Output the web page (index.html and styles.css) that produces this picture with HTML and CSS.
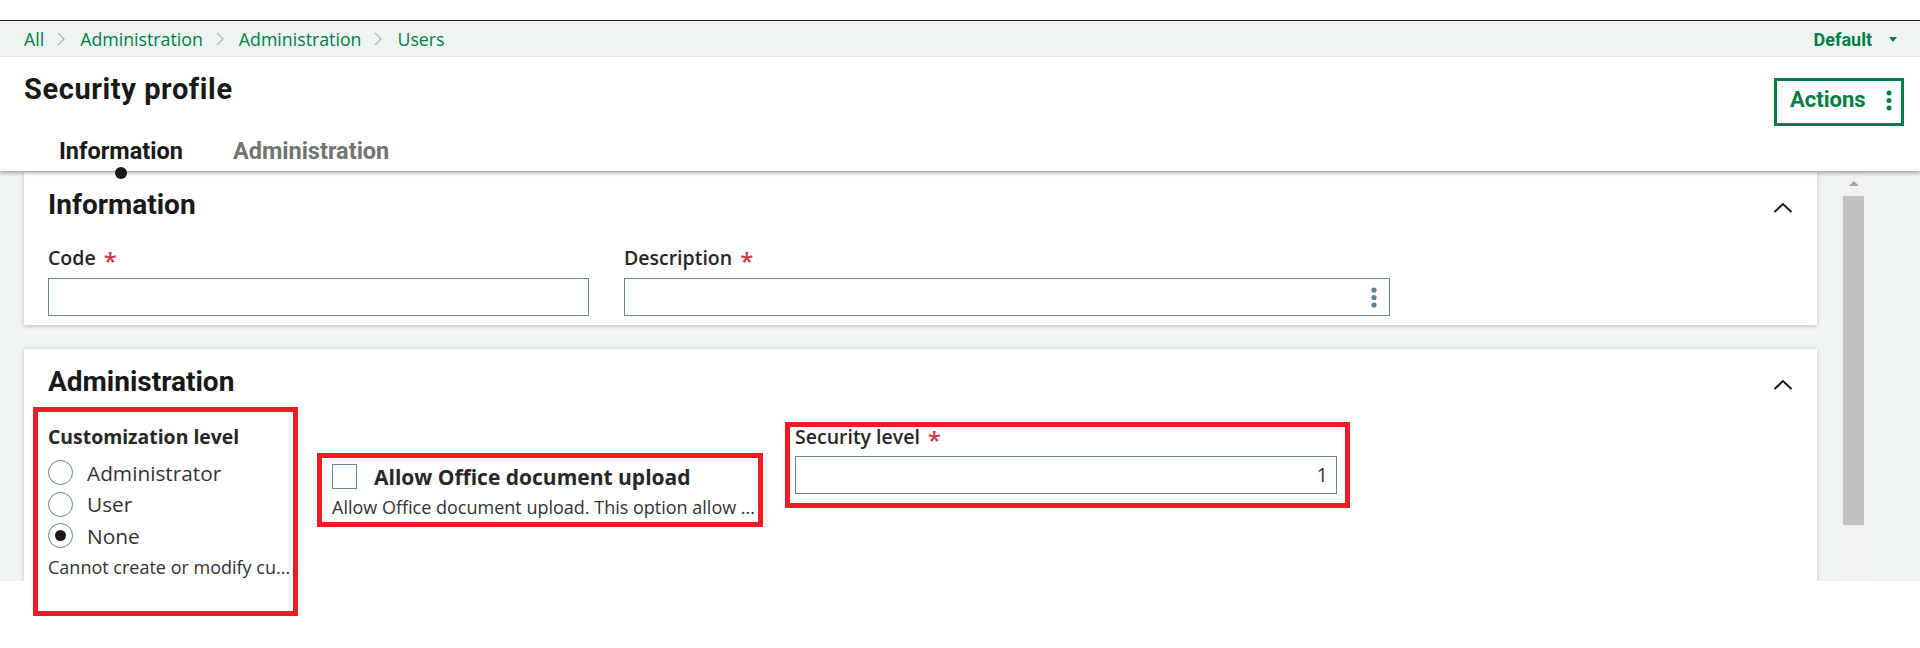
FILE: index.html
```html
<!DOCTYPE html>
<html lang="en">
<head>
<meta charset="utf-8">
<title>Security profile</title>
<link rel="stylesheet" href="styles.css">
</head>
<body>
<div class="topgap"></div>
<div class="app">
  <nav class="crumbs">
    <div class="crumb-list">
      <a class="crumb">All</a>
      <svg class="sep" viewBox="0 0 8 14"><polyline points="1,1 7,7 1,13"/></svg>
      <a class="crumb">Administration</a>
      <svg class="sep" viewBox="0 0 8 14"><polyline points="1,1 7,7 1,13"/></svg>
      <a class="crumb">Administration</a>
      <svg class="sep" viewBox="0 0 8 14"><polyline points="1,1 7,7 1,13"/></svg>
      <a class="crumb">Users</a>
    </div>
    <div class="view-select">Default<svg class="caret" viewBox="0 0 8 5"><polygon points="0,0 8,0 4,5"/></svg></div>
  </nav>
  <header class="page-header">
    <div class="head-left">
      <h1 class="page-title">Security profile</h1>
      <div class="tabs">
        <div class="tab active">Information<span class="tab-dot"></span></div>
        <div class="tab">Administration</div>
      </div>
    </div>
    <button class="actions">Actions<svg class="kebab" viewBox="0 0 6 21"><circle cx="3" cy="3" r="2.5"/><circle cx="3" cy="10.5" r="2.5"/><circle cx="3" cy="18" r="2.5"/></svg></button>
  </header>
  <div class="main">
    <div class="cards">
      <section class="card">
        <div class="card-head">
          <h2 class="card-title">Information</h2>
          <svg class="chev" viewBox="0 0 20 11"><polyline points="1.5,10 10,2 18.5,10"/></svg>
        </div>
        <div class="field-row">
          <div class="field f-code">
            <label class="flabel">Code<span class="req">*</span></label>
            <div class="input"></div>
          </div>
          <div class="field f-desc">
            <label class="flabel">Description<span class="req">*</span></label>
            <div class="input with-menu"><svg class="dots" viewBox="0 0 6 21"><circle cx="3" cy="3" r="2.6"/><circle cx="3" cy="10.5" r="2.6"/><circle cx="3" cy="18" r="2.6"/></svg></div>
          </div>
        </div>
      </section>
      <section class="card">
        <div class="card-head">
          <h2 class="card-title">Administration</h2>
          <svg class="chev" viewBox="0 0 20 11"><polyline points="1.5,10 10,2 18.5,10"/></svg>
        </div>
        <div class="field-row admin-row">
          <div class="field f-level">
            <label class="flabel legend">Customization level</label>
            <div class="radios">
              <div class="radio-row"><span class="radio"></span><span class="rlabel">Administrator</span></div>
              <div class="radio-row"><span class="radio"></span><span class="rlabel">User</span></div>
              <div class="radio-row"><span class="radio checked"></span><span class="rlabel">None</span></div>
            </div>
            <div class="help help-level">Cannot create or modify cu...</div>
          </div>
          <div class="field f-office">
            <div class="check-row"><span class="checkbox"></span><span class="clabel">Allow Office document upload</span></div>
            <div class="help help-office">Allow Office document upload. This option allow ...</div>
          </div>
          <div class="field f-sec">
            <label class="flabel">Security level<span class="req">*</span></label>
            <div class="input num">1</div>
          </div>
        </div>
      </section>
    </div>
    <div class="scrollbar">
      <div class="sb-arrow"><span class="sb-tri"></span></div>
      <div class="sb-thumb"></div>
    </div>
  </div>
</div>
<div class="mark m1"></div>
<div class="mark m2"></div>
<div class="mark m3"></div>
</body>
</html>
```
FILE: styles.css
```css
* { box-sizing: border-box; }
html { background: #fff; }
body {
  margin: 0;
  min-height: 648px;
  background: #fff;
  font-family: "Open Sans", sans-serif;
  color: #191919;
  position: relative;
}
.topgap { height: 20px; }
.app {
  border-top: 1px solid #1e1e1e;
  height: 561px;
  display: flex;
  flex-direction: column;
}
.crumbs {
  flex: none;
  height: 36px;
  background: #eff3f4;
  display: flex;
  align-items: center;
  justify-content: space-between;
  padding: 0 23px 0 24px;
}
.crumb-list {
  display: flex;
  align-items: center;
  font-size: 17.75px;
  color: #007e45;
}
.crumb { color: #007e45; text-decoration: none; }
.sep {
  width: 8px;
  height: 14px;
  margin: 0 15px 0 13px;
  fill: none;
  stroke: #b4b4b4;
  stroke-width: 1.3;
}
.view-select {
  display: flex;
  align-items: center;
  font: 700 18px Roboto, sans-serif;
  color: #007e45;
}
.caret { width: 8px; height: 5px; margin-left: 17px; fill: #007e45; }

.page-header {
  flex: none;
  height: 114px;
  background: #fff;
  box-shadow: 0 2px 4px rgba(0,0,0,.32);
  position: relative;
  z-index: 2;
  display: flex;
  justify-content: space-between;
  align-items: flex-start;
  padding: 0 16px 0 24px;
}
.page-title {
  margin: 15px 0 0;
  font: 700 29px/34px Roboto, sans-serif;
  letter-spacing: 0.6px;
  color: #191919;
}
.tabs {
  display: flex;
  gap: 50px;
  margin-top: 31px;
  padding-left: 35px;
}
.tab {
  position: relative;
  font: 700 23.5px/28px Roboto, sans-serif;
  color: #737373;
}
.tab.active { color: #191919; }
.tab-dot {
  position: absolute;
  left: 50%;
  top: 30px;
  width: 12px;
  height: 12px;
  margin-left: -6px;
  border-radius: 50%;
  background: #191919;
}
.actions {
  margin-top: 21px;
  width: 130px;
  height: 48px;
  border: 3px solid #007e45;
  background: #fff;
  display: flex;
  align-items: center;
  justify-content: space-between;
  padding: 0 9px 5px 13px;
  font: 700 22px Roboto, sans-serif;
  color: #007e45;
}
.kebab { width: 6px; height: 21px; fill: #007e45; margin-top: 2px; }

.main {
  flex: 1;
  min-height: 0;
  background: #eff3f4;
  display: flex;
  overflow: hidden;
}
.cards {
  flex: none;
  width: 1793px;
  margin-left: 24px;
  padding-top: 1px;
}
.card {
  background: #fff;
  box-shadow: 0 1px 4px rgba(0,0,0,.22);
  padding: 16px 24px 9px 24px;
}
.card + .card { margin-top: 24px; }
.card-head {
  display: flex;
  justify-content: space-between;
  align-items: center;
  height: 34px;
}
.card-title {
  margin: 0;
  font: 700 28px/34px Roboto, sans-serif;
  color: #191919;
}
.chev {
  width: 20px;
  height: 11px;
  margin-top: 5px;
  fill: none;
  stroke: #191919;
  stroke-width: 2;
}
.field-row {
  display: flex;
  gap: 35px;
  margin-top: 24px;
}
.admin-row { margin-top: 26px; }
.flabel {
  display: block;
  font: 600 19.5px/24px "Open Sans", sans-serif;
  color: #262626;
  white-space: nowrap;
}
.flabel.legend { font-weight: 700; font-size: 19.4px; }
.req {
  color: #cd384b;
  margin-left: 8px;
  font-size: 24px;
  font-weight: 600;
  line-height: 0;
  vertical-align: -0.2em;
}
.input {
  margin-top: 8px;
  height: 38px;
  border: 1px solid #668592;
  background: #fff;
}
.f-code { width: 541px; }
.f-desc { width: 766px; }
.with-menu {
  display: flex;
  align-items: center;
  justify-content: flex-end;
  padding-right: 12px;
}
.dots { width: 6px; height: 21px; fill: #5f7f8e; }

.f-level { width: 249px; }
.f-office { width: 428px; padding-top: 39px; }
.f-sec { width: 542px; }
.radios { margin-top: 8px; }
.radio-row {
  height: 31.5px;
  display: flex;
  align-items: center;
  gap: 14px;
}
.radio {
  flex: none;
  width: 25px;
  height: 25px;
  border: 1px solid #668592;
  border-radius: 50%;
  background: #fff;
  display: flex;
  align-items: center;
  justify-content: center;
}
.radio.checked::after {
  content: "";
  width: 11px;
  height: 11px;
  border-radius: 50%;
  background: #191919;
}
.rlabel {
  font: 400 20.8px/26px "Open Sans", sans-serif;
  color: #333;
}
.help {
  font: 400 18px/22px "Open Sans", sans-serif;
  color: #333;
  white-space: nowrap;
}
.help-level { margin-top: 4px; }
.help-office { margin-top: 7px; }
.check-row {
  height: 25px;
  display: flex;
  align-items: center;
  gap: 17px;
}
.checkbox {
  flex: none;
  width: 25px;
  height: 25px;
  border: 1px solid #668592;
  background: #fff;
}
.clabel {
  font: 700 21px/26px "Open Sans", sans-serif;
  color: #262626;
  white-space: nowrap;
}
.num {
  margin-top: 7px;
  text-align: right;
  padding-right: 8px;
  font: 400 20px/36px "Open Sans", sans-serif;
  color: #333;
}

.scrollbar {
  flex: none;
  width: 25px;
  margin-left: 24px;
  background: #f1f1f1;
  display: flex;
  flex-direction: column;
  align-items: center;
}
.sb-arrow {
  height: 25px;
  display: flex;
  align-items: center;
  justify-content: center;
}
.sb-tri {
  width: 0;
  height: 0;
  border-left: 5px solid transparent;
  border-right: 5px solid transparent;
  border-bottom: 5px solid #a3a3a3;
}
.sb-thumb {
  width: 21px;
  height: 329px;
  background: #c1c1c1;
}

.mark {
  position: absolute;
  border: 5px solid #ed1c24;
  pointer-events: none;
}
.m1 { left: 33px; top: 407px; width: 265px; height: 209px; }
.m2 { left: 317px; top: 453px; width: 446px; height: 74px; }
.m3 { left: 785px; top: 422px; width: 565px; height: 86px; }
```
